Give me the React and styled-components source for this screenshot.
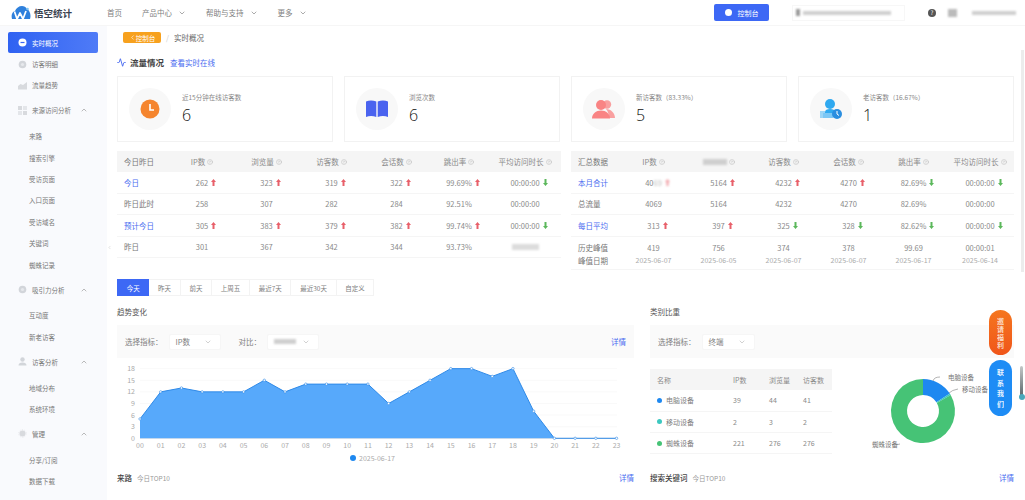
import styled, { createGlobalStyle } from "styled-components"
import { ChevronDown, ChevronUp, ChevronLeft, CircleHelp, Activity } from "lucide-react"

const GlobalStyle = createGlobalStyle`
    * { box-sizing: border-box; }
    html, body { margin: 0; padding: 0; background: #fff; }
    body {
        width: 1025px;
        height: 500px;
        overflow: hidden;
        font-family: "Noto Sans CJK SC", "Noto Sans", sans-serif;
        color: #777;
        font-size: 7.5px;
    }
`

const Page = styled.div`
    position: relative;
    width: 1025px;
    height: 500px;
    overflow: hidden;
`

const Header = styled.header`
    height: 26px;
    display: flex;
    align-items: center;
    border-bottom: 1px solid #f6f6f6;
    background: #fff;
`

const Brand = styled.div`
    width: 107px;
    padding-left: 11px;
    display: flex;
    align-items: center;
    gap: 3px;
    font-size: 9.5px;
    font-weight: 700;
    color: #3a4250;
`

const Nav = styled.nav`
    display: flex;
    align-items: center;
    gap: 20px;
    color: #808080;
`

const NavItem = styled.span`
    display: flex;
    align-items: center;
    gap: 6px;
`

const HeaderRight = styled.div`
    margin-left: auto;
    display: flex;
    align-items: center;
`

const ConsoleButton = styled.button`
    width: 55px;
    height: 17px;
    border: 0;
    border-radius: 2px;
    background: #3d68f5;
    color: #fff;
    font: inherit;
    font-size: 7px;
    display: flex;
    align-items: center;
    justify-content: center;
    gap: 6px;
`

const ConsoleDot = styled.span`
    width: 7px;
    height: 7px;
    border-radius: 50%;
    background: #fff;
`

const BlurBox = styled.div`
    width: 113px;
    height: 16px;
    margin-left: 23px;
    border: 1px solid #f7f7f7;
    padding: 0 3px;
    display: flex;
    align-items: center;
    gap: 3px;
`

const Smudge = styled.span`
    display: inline-block;
    width: ${(p) => p.$w}px;
    height: ${(p) => p.$h || 4}px;
    background: ${(p) => p.$c || "#cfcfcf"};
    filter: blur(1.2px);
`

const HelpBadge = styled.span`
    width: 8px;
    height: 8px;
    margin-left: 23px;
    border-radius: 50%;
    background: #555;
    color: #fff;
    font-size: 6px;
    line-height: 8px;
    text-align: center;
`

const UserArea = styled.div`
    width: 81px;
    margin-left: 8px;
    padding-left: 4px;
    display: flex;
    align-items: center;
    gap: 15px;
`

const Body = styled.div`
    display: flex;
    height: 474px;
`

const Sidebar = styled.aside`
    width: 107px;
    flex: none;
    padding-top: 6px;
    background: #f9fafd;
    font-size: 6.5px;
    color: #777;
`

const SideItem = styled.div`
    height: 21.4px;
    margin: 0 9px 0 8px;
    padding-left: 10px;
    display: flex;
    align-items: center;
    gap: 5px;
    border-radius: 2px;
    background: ${(p) => (p.$active ? "linear-gradient(90deg, #2f62f2, #4f7bf7)" : "transparent")};
    color: ${(p) => (p.$active ? "#fff" : "#777")};
`

const SideGroup = styled(SideItem)`
    margin-top: 3.6px;
    margin-bottom: 4.4px;
`

const SideChevron = styled.span`
    margin-left: auto;
    margin-right: 10px;
    display: flex;
`

const SubItem = styled.div`
    height: 21.4px;
    padding-left: 29px;
    display: flex;
    align-items: center;
`

const Main = styled.main`
    flex: 1;
    min-width: 0;
    padding: 6px 11px 0 10px;
`

const Crumbs = styled.div`
    height: 11px;
    padding-left: 6px;
    display: flex;
    align-items: center;
    gap: 5px;
    color: #666;
`

const BackTag = styled.span`
    width: 38px;
    height: 11px;
    border-radius: 2px;
    background: #f7a11e;
    color: #fff;
    font-size: 6.5px;
    display: flex;
    align-items: center;
    justify-content: center;
`

const Muted = styled.span`
    color: #ccc;
`

const TrafficTitle = styled.div`
    height: 12px;
    margin-top: 13px;
    display: flex;
    align-items: center;
    gap: 4px;
    font-size: 8.5px;
    font-weight: 700;
    color: #444;
`

const BlueLink = styled.a`
    color: #4a6cf0;
    font-size: 7.5px;
    font-weight: 400;
    margin-left: ${(p) => p.$left || 0}px;
`

const Cards = styled.div`
    margin-top: 8px;
    display: grid;
    grid-template-columns: repeat(4, 216px);
    gap: 11px;
`

const Card = styled.div`
    height: 66px;
    border: 1px solid #f2f2f2;
    padding: 11px;
    display: flex;
    align-items: center;
    gap: 11px;
`

const CardCircle = styled.div`
    width: 42px;
    height: 42px;
    border-radius: 50%;
    background: #f8f8f8;
    display: flex;
    align-items: center;
    justify-content: center;
`

const CardLabel = styled.div`
    font-size: 6.5px;
    color: #888;
    line-height: 9px;
`

const CardValue = styled.div`
    margin-top: 3px;
    font-family: "Open Sans", "Noto Sans", sans-serif;
    font-size: 16px;
    font-weight: 300;
    line-height: 20px;
    color: #111;
`

const Tables = styled.div`
    margin-top: 9px;
    height: 119px;
    display: flex;
    gap: 10px;
`

const StatTable = styled.div`
    width: ${(p) => p.$width}px;
`

const StatRow = styled.div`
    display: grid;
    grid-template-columns: ${(p) => p.$cols};
    height: ${(p) => p.$h || 21.4}px;
    align-items: center;
    text-align: center;
    background: ${(p) => (p.$head ? "#f5f5f5" : "transparent")};
    border-bottom: ${(p) => (p.$head ? "none" : "1px solid #f5f5f5")};
    color: #8a8a8a;
`

const RowName = styled.span`
    padding-left: 7px;
    text-align: left;
    color: ${(p) => (p.$link ? "#4a6cf0" : "#777")};
`

const HeadCell = styled.span`
    display: inline-flex;
    align-items: center;
    justify-content: center;
    gap: 2px;
`

const ValueCell = styled.span`
    display: inline-flex;
    align-items: center;
    justify-content: center;
`

const Hanging = styled.span`
    display: inline-flex;
    width: 9px;
    margin-right: -9px;
    padding-left: 3px;
    filter: ${(p) => (p.$faded ? "blur(0.8px) opacity(0.6)" : "none")};
`

const FadedDigits = styled.span`
    filter: blur(0.9px);
    opacity: 0.6;
`

const Stacked = styled.span`
    display: flex;
    flex-direction: column;
    padding-top: 2px;
    line-height: 13px;
    color: #8a8a8a;
`

const StackedName = styled(Stacked)`
    padding-left: 7px;
    text-align: left;
    color: #777;
`

const Dates = styled.span`
    color: #aaa;
    font-size: 7px;
`

const Tabs = styled.div`
    margin-top: 9px;
    display: flex;
    height: 17px;
`

const Tab = styled.span`
    padding: 0 8.7px;
    font-size: 6.5px;
    display: flex;
    align-items: center;
    border: 1px solid ${(p) => (p.$active ? "#3d68f5" : "#f3f3f3")};
    border-left-width: ${(p) => (p.$active ? 1 : 0)}px;
    background: ${(p) => (p.$active ? "#3d68f5" : "#fff")};
    color: ${(p) => (p.$active ? "#fff" : "#808080")};
`

const Columns = styled.div`
    display: grid;
    grid-template-columns: 517px 364px;
    gap: 16px;
`

const SectionTitle = styled.div`
    margin-top: 11px;
    height: 10px;
    line-height: 10px;
    color: #555;
`

const FilterBar = styled.div`
    margin-top: 8px;
    height: 33px;
    padding: 0 8px;
    background: #fafafa;
    display: flex;
    align-items: center;
    color: #808080;
`

const SelectBox = styled.div`
    width: ${(p) => p.$w}px;
    height: 16px;
    margin: 0 ${(p) => p.$after || 0}px 0 6px;
    padding: 0 8px 0 6px;
    background: #fff;
    border: 1px solid #f6f6f6;
    border-radius: 2px;
    display: flex;
    align-items: center;
    justify-content: space-between;
`

const DetailLink = styled.a`
    margin-left: auto;
    color: #4a6cf0;
    font-weight: 400;
`

const ChartSvg = styled.svg`
    display: block;
    margin-top: 4px;
    width: 517px;
    height: 102px;
`

const BottomTitle = styled.div`
    margin-top: ${(p) => p.$top}px;
    display: flex;
    align-items: center;
    gap: 5px;
    color: #444;
    font-weight: 500;
`

const BottomHint = styled.span`
    font-size: 6.5px;
    font-weight: 400;
    color: #999;
`

const DeviceRow = styled.div`
    display: flex;
    align-items: flex-start;
    margin-top: 4px;
`

const DeviceTable = styled.div`
    width: 182px;
    margin-top: 7px;
`

const DeviceLine = styled.div`
    height: 21.3px;
    display: grid;
    grid-template-columns: 76px 36px 34px 29px;
    align-items: center;
    padding-left: 7px;
    font-size: 7px;
    background: ${(p) => (p.$head ? "#f5f5f5" : "transparent")};
    border-bottom: ${(p) => (p.$head ? "none" : "1px solid #f5f5f5")};
    color: #8a8a8a;
`

const DeviceName = styled.span`
    display: flex;
    align-items: center;
    gap: 4px;
    color: #808080;
`

const Dot = styled.span`
    width: 5px;
    height: 5px;
    border-radius: 50%;
    background: ${(p) => p.$c};
`

const DonutSvg = styled.svg`
    display: block;
    width: 182px;
    height: 101px;
`

const FloatButton = styled.div`
    position: absolute;
    left: 989px;
    top: ${(p) => p.$top}px;
    width: 23px;
    height: ${(p) => p.$h}px;
    border-radius: 12px;
    background: ${(p) => p.$bg};
    color: ${(p) => p.$ink};
    font-size: 7px;
    font-weight: 700;
    display: flex;
    flex-direction: column;
    align-items: center;
    justify-content: center;
`

const FloatGlyph = styled.span`
    display: block;
    height: ${(p) => p.$lh}px;
    line-height: ${(p) => p.$lh}px;
    overflow: hidden;
`

const Thermo = styled.div`
    position: absolute;
    left: 1020px;
    top: 366px;
    width: 3px;
    height: 30px;
    background: linear-gradient(180deg, #c4c8c8, #5c686c);
    border-radius: 2px;

    &::after {
        content: "";
        position: absolute;
        left: -1px;
        bottom: -4px;
        width: 6px;
        height: 6px;
        border-radius: 50%;
        background: #4aa8bb;
    }
`

const ScrollThumb = styled.div`
    position: absolute;
    left: 1021px;
    top: 50px;
    width: 3px;
    height: 222px;
    background: #ececec;
`

const CollapseHandle = styled.div`
    position: absolute;
    left: 107px;
    top: 237px;
    width: 5px;
    height: 20px;
    background: #fff;
    color: #bbb;
    display: flex;
    align-items: center;
`

const Arrow = ({ dir }) => (
    <svg width="5" height="7" viewBox="0 0 5 7">
        <path
            d={dir === "up" ? "M2.5 0 5 3H3.5V7h-2V3H0Z" : "M2.5 7 5 4H3.5V0h-2V4H0Z"}
            fill={dir === "up" ? "#e8606a" : "#5cb85c"}
        />
    </svg>
)

const Value = ({ text, dir, faded }) => (
    <ValueCell>
        {faded ? <>{text.slice(0, 2)}<FadedDigits>{text.slice(2)}</FadedDigits></> : text}
        {dir && <Hanging $faded={faded}><Arrow dir={dir} /></Hanging>}
    </ValueCell>
)

const Head = ({ text }) => (
    <HeadCell>
        {text}
        <CircleHelp size={6} strokeWidth={1.5} color="#aaa" />
    </HeadCell>
)

const Logo = () => (
    <svg width="20" height="15" viewBox="0 0 20 15">
        <path d="M1 14C0 10 1 7 4 6 5 3 8 1 11 1c2 0 4 1 5 3 2 1 3.5 4 3.5 7 0 1-.2 2-.5 3Z" fill="#2f80dc" />
        <circle cx="16.5" cy="4" r="1.3" fill="#7fc4f2" />
        <path d="M3.5 6.500 6 14l3-6 3 6 3-8" fill="none" stroke="#fff" strokeWidth="1.7" strokeLinejoin="round" />
    </svg>
)

const ClockIcon = () => (
    <svg width="20" height="20" viewBox="0 0 20 20">
        <circle cx="10" cy="10" r="9.5" fill="#f5852e" />
        <path d="M10 5v6h4" fill="none" stroke="#fff" strokeWidth="1.6" />
    </svg>
)

const BookIcon = () => (
    <svg width="24" height="18" viewBox="0 0 24 18">
        <path d="M1 1.5C4 0 8 0 11.3 1.5V17C8 15.8 4 15.8 1 17Z" fill="#4a63ef" />
        <path d="M23 1.5C20 0 16 0 12.7 1.5V17C16 15.8 20 15.8 23 17Z" fill="#4a63ef" />
    </svg>
)

const PeopleIcon = () => (
    <svg width="24" height="20" viewBox="0 0 24 20">
        <circle cx="15" cy="5.5" r="4.2" fill="#f9a0a0" />
        <path d="M14 10c5 0 9 4 9 9h-6c0-3-1-7-3-9Z" fill="#f9a0a0" />
        <circle cx="9" cy="6" r="5" fill="#f98484" />
        <path d="M0 19.5C0 15 4 11.5 9 11.5s9 3.5 9 8Z" fill="#f98484" />
    </svg>
)

const ReturnIcon = () => (
    <svg width="24" height="22" viewBox="0 0 24 22">
        <circle cx="11" cy="6" r="5" fill="#2fa9f0" />
        <path d="M6 19v-5c0-2 2-3 5-3s5 1 5 3v5Z" fill="#2fa9f0" />
        <rect x="1" y="13" width="5" height="7" fill="#9bd5f7" />
        <rect x="4" y="15" width="10" height="5" fill="#7cc7f5" />
        <circle cx="18" cy="16" r="5" fill="#2a8ee0" />
        <path d="M18 13v3l2 1.5" fill="none" stroke="#fff" strokeWidth="1" />
    </svg>
)

const DiscIcon = ({ active }) => (
    <svg width="9" height="9" viewBox="0 0 9 9">
        <circle cx="4.5" cy="4.5" r={active ? 4 : 3.8} fill={active ? "#fff" : "#d2d5da"} />
        {active
            ? <rect x="2.5" y="3.9" width="4" height="1.2" fill="#3d68f5" />
            : <circle cx="4.5" cy="4.5" r="1.6" fill="#e6e8ec" />}
    </svg>
)

const AreaIcon = () => (
    <svg width="9" height="9" viewBox="0 0 9 9">
        <path d="M0 8.5V5l2.5-2L5 4l4-3v7.5Z" fill="#d8dade" />
    </svg>
)

const GridIcon = () => (
    <svg width="9" height="9" viewBox="0 0 9 9">
        <rect x="0" y="0" width="4" height="4" fill="#d8dade" />
        <rect x="5" y="0" width="4" height="4" fill="#e4e6ea" />
        <rect x="0" y="5" width="4" height="4" fill="#e4e6ea" />
        <rect x="5" y="5" width="4" height="4" fill="#d8dade" />
    </svg>
)

const PersonIcon = () => (
    <svg width="9" height="9" viewBox="0 0 9 9">
        <circle cx="4.5" cy="2.5" r="2.2" fill="#d2d5da" />
        <path d="M.5 8.5C.5 6.500 2 5.500 4.500 5.500s4 1 4 3Z" fill="#d2d5da" />
    </svg>
)

const GearIcon = () => (
    <svg width="9" height="9" viewBox="0 0 9 9">
        <circle cx="4.5" cy="4.5" r="3" fill="#d8dade" />
        <circle cx="4.5" cy="4.5" r="3.8" fill="none" stroke="#e4e6ea" strokeWidth="0.8" strokeDasharray="1.2 1.2" />
    </svg>
)

const SOURCE_PAGES = ["来路", "搜索引擎", "受访页面", "入口页面", "受访域名", "关键词", "蜘蛛记录"]

const leftCols = "53px 64px 65px 65px 65px 60px 72px"
const rightCols = "50px 65px 65px 65px 65px 65px 68px"

const leftRows = [
    { name: "今日", link: true, cells: [["262", "up"], ["323", "up"], ["319", "up"], ["322", "up"], ["99.69%", "up"], ["00:00:00", "down"]] },
    { name: "昨日此时", cells: [["258"], ["307"], ["282"], ["284"], ["92.51%"], ["00:00:00"]] },
    { name: "预计今日", link: true, cells: [["305", "up"], ["383", "up"], ["379", "up"], ["382", "up"], ["99.74%", "up"], ["00:00:00", "down"]] },
]

const rightRows = [
    { name: "本月合计", link: true, cells: [["4069", "up", true], ["5164", "up"], ["4232", "up"], ["4270", "up"], ["82.69%", "down"], ["00:00:00", "down"]] },
    { name: "总流量", cells: [["4069"], ["5164"], ["4232"], ["4270"], ["82.69%"], ["00:00:00"]] },
    { name: "每日平均", link: true, cells: [["313", "up"], ["397", "up"], ["325", "down"], ["328", "down"], ["82.62%", "down"], ["00:00:00", "down"]] },
]

const peaks = [
    ["419", "2025-06-07"],
    ["756", "2025-06-05"],
    ["374", "2025-06-07"],
    ["378", "2025-06-07"],
    ["99.69", "2025-06-17"],
    ["00:00:01", "2025-06-14"],
]

const TABS = ["今天", "昨天", "前天", "上周五", "最近7天", "最近30天", "自定义"]

const trend = [5, 12, 13, 12, 12, 12, 15, 12, 14, 14, 14, 14, 9, 12, 15, 18, 18, 16, 18, 7, 0, 0, 0, 0]
const chartX = (i) => 23 + i * 20.72
const chartY = (v) => 76.3 - v * 3.87
const linePoints = trend.map((v, i) => `${chartX(i)},${chartY(v)}`).join(" ")

const TrendChart = () => (
    <ChartSvg viewBox="0 0 517 102">
        {[0, 3, 6, 9, 12, 15, 18].map((v) => (
            <g key={v}>
                <line x1="23" x2="500" y1={chartY(v)} y2={chartY(v)} stroke={v === 0 ? "#d8d8d8" : "#f6f6f6"} strokeWidth="0.7" />
                <text x="18" y={chartY(v) + 2.5} textAnchor="end" fontSize="7" fill="#aaa">{v}</text>
            </g>
        ))}
        <polygon points={`23,76.3 ${linePoints} ${chartX(23)},76.3`} fill="#57a9fb" />
        <polyline points={linePoints} fill="none" stroke="#2f8ae8" strokeWidth="1" />
        {trend.map((v, i) => (
            <circle key={i} cx={chartX(i)} cy={chartY(v)} r="1.2" fill="#fff" stroke="#2f8ae8" strokeWidth="0.6" />
        ))}
        {trend.map((v, i) => (
            <text key={i} x={chartX(i)} y="86" textAnchor="middle" fontSize="7" fill="#aaa">
                {String(i).padStart(2, "0")}
            </text>
        ))}
        <circle cx="236" cy="96" r="3" fill="#1e88f0" />
        <text x="242" y="98.5" fontSize="7" fill="#aaa">2025-06-17</text>
    </ChartSvg>
)

const slice = (from, to, outer, inner, cx, cy) => {
    const pt = (deg, r) => {
        const a = ((deg - 90) * Math.PI) / 180
        return `${(cx + r * Math.cos(a)).toFixed(2)} ${(cy + r * Math.sin(a)).toFixed(2)}`
    }
    const large = to - from > 180 ? 1 : 0
    return `M${pt(from, outer)}A${outer} ${outer} 0 ${large} 1 ${pt(to, outer)}L${pt(to, inner)}A${inner} ${inner} 0 ${large} 0 ${pt(from, inner)}Z`
}

const Donut = () => (
    <DonutSvg viewBox="0 0 182 101">
        <path d={slice(0, 57, 32, 16, 91, 49)} fill="#1e88f0" />
        <path d={slice(57, 60, 32, 16, 91, 49)} fill="#3cc8c0" />
        <path d={slice(60, 360, 32, 16, 91, 49)} fill="#46c376" />
        <path d="M101 19Q102 15 108 15" fill="none" stroke="#666" strokeWidth="0.5" />
        <path d="M117 31Q120 28 126 27" fill="none" stroke="#666" strokeWidth="0.5" />
        <path d="M68 82Q65 83 60 83" fill="none" stroke="#666" strokeWidth="0.5" />
        <text x="116" y="18" fontSize="6.5" fill="#777">电脑设备</text>
        <text x="130" y="30" fontSize="6.5" fill="#777">移动设备</text>
        <text x="40" y="85" fontSize="6.5" fill="#777">蜘蛛设备</text>
    </DonutSvg>
)

const App = () => (
    <Page>
        <GlobalStyle />
        <Header>
            <Brand><Logo />悟空统计</Brand>
            <Nav>
                <NavItem>首页</NavItem>
                <NavItem>产品中心<ChevronDown size={8} /></NavItem>
                <NavItem>帮助与支持<ChevronDown size={8} /></NavItem>
                <NavItem>更多<ChevronDown size={8} /></NavItem>
            </Nav>
            <HeaderRight>
                <ConsoleButton><ConsoleDot />控制台</ConsoleButton>
                <BlurBox><Smudge $w={4} $h={7} $c="#999" /><Smudge $w={88} /></BlurBox>
                <HelpBadge>?</HelpBadge>
                <UserArea>
                    <Smudge $w={9} $h={8} $c="#bbb" />
                    <Smudge $w={44} />
                </UserArea>
            </HeaderRight>
        </Header>
        <Body>
            <Sidebar>
                <SideItem $active><DiscIcon active />实时概况</SideItem>
                <SideItem><DiscIcon />访客明细</SideItem>
                <SideItem><AreaIcon />流量趋势</SideItem>
                <SideGroup>
                    <GridIcon />来源访问分析
                    <SideChevron><ChevronUp size={8} color="#999" /></SideChevron>
                </SideGroup>
                {SOURCE_PAGES.map((item) => <SubItem key={item}>{item}</SubItem>)}
                <SideGroup>
                    <DiscIcon />吸引力分析
                    <SideChevron><ChevronUp size={8} color="#999" /></SideChevron>
                </SideGroup>
                <SubItem>互动度</SubItem>
                <SubItem>新老访客</SubItem>
                <SideGroup>
                    <PersonIcon />访客分析
                    <SideChevron><ChevronUp size={8} color="#999" /></SideChevron>
                </SideGroup>
                <SubItem>地域分布</SubItem>
                <SubItem>系统环境</SubItem>
                <SideGroup>
                    <GearIcon />管理
                    <SideChevron><ChevronUp size={8} color="#999" /></SideChevron>
                </SideGroup>
                <SubItem>分享/订阅</SubItem>
                <SubItem>数据下载</SubItem>
            </Sidebar>
            <Main>
                <Crumbs>
                    <BackTag><ChevronLeft size={7} />控制台</BackTag>
                    <Muted>/</Muted>
                    实时概况
                </Crumbs>
                <TrafficTitle>
                    <Activity size={9} color="#4a6cf0" strokeWidth={2.5} />
                    流量情况
                    <BlueLink $left={2}>查看实时在线</BlueLink>
                </TrafficTitle>
                <Cards>
                    <Card>
                        <CardCircle><ClockIcon /></CardCircle>
                        <div><CardLabel>近15分钟在线访客数</CardLabel><CardValue>6</CardValue></div>
                    </Card>
                    <Card>
                        <CardCircle><BookIcon /></CardCircle>
                        <div><CardLabel>浏览次数</CardLabel><CardValue>6</CardValue></div>
                    </Card>
                    <Card>
                        <CardCircle><PeopleIcon /></CardCircle>
                        <div><CardLabel>新访客数（83.33%）</CardLabel><CardValue>5</CardValue></div>
                    </Card>
                    <Card>
                        <CardCircle><ReturnIcon /></CardCircle>
                        <div><CardLabel>老访客数（16.67%）</CardLabel><CardValue>1</CardValue></div>
                    </Card>
                </Cards>
                <Tables>
                    <StatTable $width={444}>
                        <StatRow $head $cols={leftCols}>
                            <RowName>今日昨日</RowName>
                            <Head text="IP数" />
                            <Head text="浏览量" />
                            <Head text="访客数" />
                            <Head text="会话数" />
                            <Head text="跳出率" />
                            <Head text="平均访问时长" />
                        </StatRow>
                        {leftRows.map((row) => (
                            <StatRow key={row.name} $cols={leftCols}>
                                <RowName $link={row.link}>{row.name}</RowName>
                                {row.cells.map(([text, dir], i) => <Value key={i} text={text} dir={dir} />)}
                            </StatRow>
                        ))}
                        <StatRow $cols={leftCols}>
                            <RowName>昨日</RowName>
                            <Value text="301" />
                            <Value text="367" />
                            <Value text="342" />
                            <Value text="344" />
                            <Value text="93.73%" />
                            <ValueCell><Smudge $w={27} $h={6} $c="#dcdcdc" /></ValueCell>
                        </StatRow>
                    </StatTable>
                    <StatTable $width={443}>
                        <StatRow $head $cols={rightCols}>
                            <RowName>汇总数据</RowName>
                            <Head text="IP数" />
                            <HeadCell><Smudge $w={24} $h={6} /><CircleHelp size={6} strokeWidth={1.5} color="#aaa" /></HeadCell>
                            <Head text="访客数" />
                            <Head text="会话数" />
                            <Head text="跳出率" />
                            <Head text="平均访问时长" />
                        </StatRow>
                        {rightRows.map((row) => (
                            <StatRow key={row.name} $cols={rightCols}>
                                <RowName $link={row.link}>{row.name}</RowName>
                                {row.cells.map(([text, dir, faded], i) => <Value key={i} text={text} dir={dir} faded={faded} />)}
                            </StatRow>
                        ))}
                        <StatRow $cols={rightCols} $h={33}>
                            <StackedName><span>历史峰值</span><span>峰值日期</span></StackedName>
                            {peaks.map(([top, date]) => (
                                <Stacked key={date + top}><span>{top}</span><Dates>{date}</Dates></Stacked>
                            ))}
                        </StatRow>
                    </StatTable>
                </Tables>
                <Tabs>
                    {TABS.map((tab, i) => <Tab key={tab} $active={i === 0}>{tab}</Tab>)}
                </Tabs>
                <Columns>
                    <section>
                        <SectionTitle>趋势变化</SectionTitle>
                        <FilterBar>
                            选择指标：
                            <SelectBox $w={52} $after={18}>IP数<ChevronDown size={8} color="#bbb" /></SelectBox>
                            对比：
                            <SelectBox $w={52}><Smudge $w={22} $h={5} /><ChevronDown size={8} color="#bbb" /></SelectBox>
                            <DetailLink>详情</DetailLink>
                        </FilterBar>
                        <TrendChart />
                        <BottomTitle $top={8}>来路<BottomHint>今日TOP10</BottomHint><DetailLink>详情</DetailLink></BottomTitle>
                    </section>
                    <section>
                        <SectionTitle>类别比重</SectionTitle>
                        <FilterBar>
                            选择指标：
                            <SelectBox $w={53}>终端<ChevronDown size={8} color="#bbb" /></SelectBox>
                        </FilterBar>
                        <DeviceRow>
                            <DeviceTable>
                                <DeviceLine $head><span>名称</span><span>IP数</span><span>浏览量</span><span>访客数</span></DeviceLine>
                                <DeviceLine><DeviceName><Dot $c="#1e88f0" />电脑设备</DeviceName><span>39</span><span>44</span><span>41</span></DeviceLine>
                                <DeviceLine><DeviceName><Dot $c="#3cc8c0" />移动设备</DeviceName><span>2</span><span>3</span><span>2</span></DeviceLine>
                                <DeviceLine><DeviceName><Dot $c="#46c376" />蜘蛛设备</DeviceName><span>221</span><span>276</span><span>276</span></DeviceLine>
                            </DeviceTable>
                            <Donut />
                        </DeviceRow>
                        <BottomTitle $top={9}>搜索关键词<BottomHint>今日TOP10</BottomHint><DetailLink>详情</DetailLink></BottomTitle>
                    </section>
                </Columns>
            </Main>
        </Body>
        <CollapseHandle><ChevronLeft size={5} /></CollapseHandle>
        <ScrollThumb />
        <FloatButton $top={310} $h={45} $ink="#fbd9c4" $bg="linear-gradient(180deg, #f5761f, #f0561a)">
            {["邀", "请", "福", "利"].map((c) => <FloatGlyph key={c} $lh={8}>{c}</FloatGlyph>)}
        </FloatButton>
        <FloatButton $top={360} $h={56} $ink="#e8f3ff" $bg="#1e8cf5">
            {["联", "系", "我", "们"].map((c) => <FloatGlyph key={c} $lh={10.5}>{c}</FloatGlyph>)}
        </FloatButton>
        <Thermo />
    </Page>
)

export default App
